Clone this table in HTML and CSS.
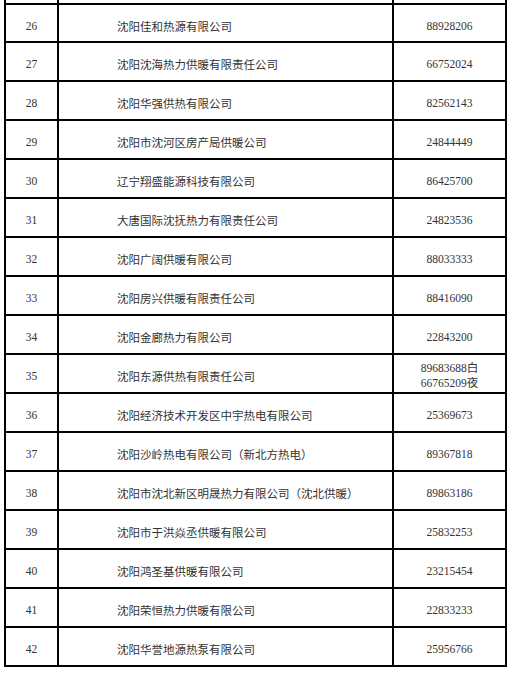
FILE: index.html
```html
<!DOCTYPE html>
<html lang="zh-CN">
<head>
<meta charset="utf-8">
<title>供热单位联系电话</title>
<link rel="stylesheet" href="styles.css">
</head>
<body>
<div class="table">
  <div class="cell top"></div><div class="cell top"></div><div class="cell top"></div>

  <div class="cell num">26</div><div class="cell name">沈阳佳和热源有限公司</div><div class="cell tel">88928206</div>
  <div class="cell num">27</div><div class="cell name">沈阳沈海热力供暖有限责任公司</div><div class="cell tel">66752024</div>
  <div class="cell num">28</div><div class="cell name">沈阳华强供热有限公司</div><div class="cell tel">82562143</div>
  <div class="cell num">29</div><div class="cell name">沈阳市沈河区房产局供暖公司</div><div class="cell tel">24844449</div>
  <div class="cell num">30</div><div class="cell name">辽宁翔盛能源科技有限公司</div><div class="cell tel">86425700</div>
  <div class="cell num">31</div><div class="cell name">大唐国际沈抚热力有限责任公司</div><div class="cell tel">24823536</div>
  <div class="cell num">32</div><div class="cell name">沈阳广阔供暖有限公司</div><div class="cell tel">88033333</div>
  <div class="cell num">33</div><div class="cell name">沈阳房兴供暖有限责任公司</div><div class="cell tel">88416090</div>
  <div class="cell num">34</div><div class="cell name">沈阳金廊热力有限公司</div><div class="cell tel">22843200</div>
  <div class="cell num">35</div><div class="cell name">沈阳东源供热有限责任公司</div><div class="cell tel multi">89683688白<br>66765209夜</div>
  <div class="cell num">36</div><div class="cell name">沈阳经济技术开发区中宇热电有限公司</div><div class="cell tel">25369673</div>
  <div class="cell num">37</div><div class="cell name">沈阳沙岭热电有限公司（新北方热电）</div><div class="cell tel">89367818</div>
  <div class="cell num">38</div><div class="cell name">沈阳市沈北新区明晟热力有限公司（沈北供暖）</div><div class="cell tel">89863186</div>
  <div class="cell num">39</div><div class="cell name">沈阳市于洪焱丞供暖有限公司</div><div class="cell tel">25832253</div>
  <div class="cell num">40</div><div class="cell name">沈阳鸿圣基供暖有限公司</div><div class="cell tel">23215454</div>
  <div class="cell num">41</div><div class="cell name">沈阳荣恒热力供暖有限公司</div><div class="cell tel">22833233</div>
  <div class="cell num">42</div><div class="cell name">沈阳华誉地源热泵有限公司</div><div class="cell tel">25956766</div>
</div>
</body>
</html>
```
FILE: styles.css
```css
html, body {
  margin: 0;
  padding: 0;
  background: #ffffff;
}

body {
  padding-left: 4px;
}

.table {
  width: 503px;
  display: grid;
  grid-template-columns: 51px 333px 111px;
  grid-template-rows: 3px 36px repeat(16, 37px);
  column-gap: 2px;
  row-gap: 2px;
  padding: 0 2px 2px 2px;
  box-sizing: border-box;
  background: #000000;
  color: #333333;
  font-family: "Liberation Serif", "Noto Sans CJK SC", serif;
  font-size: 11.5px;
}

.cell {
  background: #ffffff;
  display: flex;
  align-items: center;
  padding-top: 5px;
  box-sizing: border-box;
  line-height: 14px;
}

.cell.top {
  padding: 0;
}

.num {
  justify-content: center;
}

.name {
  padding-left: 58px;
  font-family: "Noto Sans CJK SC", sans-serif;
  font-size: 11.5px;
  color: #333333;
}

.tel {
  justify-content: center;
  text-align: center;
}

.tel.multi {
  padding-top: 4px;
  line-height: 14.5px;
}
```
